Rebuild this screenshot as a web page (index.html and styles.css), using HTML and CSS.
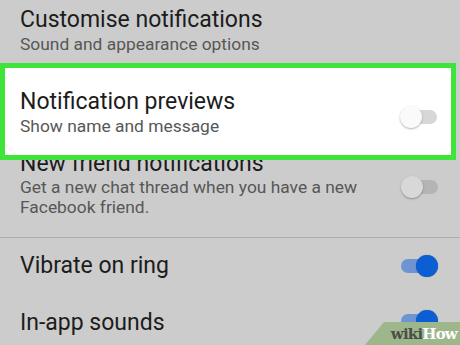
FILE: index.html
```html
<!DOCTYPE html>
<html lang="en">

<head>
    <meta charset="UTF-8">
    <link rel="stylesheet" href="styles.css">
    <title>Notifications</title>
</head>

<body>
    <div class="settings">
        <div class="row first">
            <div class="text">
                <div class="title">Customise notifications</div>
                <div class="sub">Sound and appearance options</div>
            </div>
        </div>

        <!-- highlighted row -->
        <div class="row highlight">
            <div class="text">
                <div class="title">Notification previews</div>
                <div class="sub">Show name and message</div>
            </div>
            <div class="toggle"></div>
        </div>

        <div class="row friend">
            <div class="text">
                <div class="title">New friend notifications</div>
                <div class="sub">Get a new chat thread when you have a new<br>Facebook friend.</div>
            </div>
            <div class="toggle dim"></div>
        </div>

        <div class="divider"></div>

        <div class="row simple">
            <div class="text">
                <div class="title">Vibrate on ring</div>
            </div>
            <div class="toggle on"></div>
        </div>

        <div class="row simple last">
            <div class="text">
                <div class="title">In-app sounds</div>
            </div>
            <div class="toggle on"></div>
        </div>
    </div>

    <div class="badge"><span class="wiki">wiki</span><span class="how">How</span></div>
</body>

</html>
```

FILE: styles.css
```css
body {
    margin: 0;
    width: 460px;
    height: 345px;
    overflow: hidden;
    position: relative;
    background-color: #cccccc;
    font-family: Roboto, "Liberation Sans", sans-serif;
}

.settings {
    display: flex;
    flex-direction: column;
}

.row {
    display: flex;
    align-items: center;
    justify-content: space-between;
    padding: 0 22px 0 20px;
}

.title {
    font-size: 23px;
    line-height: 26px;
    color: #1c1c1c;
}

.sub {
    font-size: 17.4px;
    line-height: 22px;
    color: #575757;
}

.first {
    padding-top: 7px;
}

.highlight {
    position: relative;
    z-index: 2;
    margin-top: 8px;
    width: 456px;
    height: 97px;
    box-sizing: border-box;
    border: 5px solid #3fe43a;
    background-color: #ffffff;
    padding: 10px 14px 0 15px;
    align-items: center;
}

.highlight .text {
    margin-top: -8px;
}

.friend {
    margin-top: -9px;
    padding-bottom: 20px;
}

.friend .sub {
    line-height: 20px;
}

.friend .toggle {
    margin-top: 6px;
}

.divider {
    height: 1px;
    background-color: #acacac;
}

.simple {
    padding-top: 15px;
}

.last {
    padding-top: 31px;
}

.last .toggle {
    margin-top: -5px;
}

/* switches */
.toggle {
    position: relative;
    width: 37px;
    height: 24px;
    flex-shrink: 0;
}

.toggle::before {
    content: "";
    position: absolute;
    left: 3px;
    right: 0;
    top: 5px;
    height: 14px;
    border-radius: 7px;
    background-color: #d7d7d7;
}

.toggle::after {
    content: "";
    position: absolute;
    left: 0;
    top: 1px;
    width: 22px;
    height: 22px;
    border-radius: 50%;
    background-color: #fafafa;
    box-shadow: 0 1px 2px rgba(0, 0, 0, 0.3);
}

.toggle.dim::before {
    background-color: #b4b4b4;
}

.toggle.dim::after {
    background-color: #d8d8d8;
}

.toggle.on::before {
    left: 0;
    right: 6px;
    background-color: #6e95d2;
}

.toggle.on::after {
    left: auto;
    right: 0;
    background-color: #0b5fd3;
    box-shadow: 0 0 1px rgba(0, 40, 120, 0.6);
}

/* watermark */
.badge {
    position: absolute;
    right: 0;
    bottom: 0;
    width: 95px;
    height: 23px;
    box-sizing: border-box;
    padding: 2px 3px 0 0;
    text-align: right;
    background-color: #9db68b;
    clip-path: polygon(19px 0, 100% 0, 100% 100%, 0 100%);
    font-family: "DejaVu Serif", "Liberation Serif", serif;
    font-weight: bold;
    font-size: 15px;
    line-height: 20px;
    letter-spacing: -0.8px;
}

.wiki {
    color: #4b4e48;
}

.how {
    color: #ffffff;
}
```
